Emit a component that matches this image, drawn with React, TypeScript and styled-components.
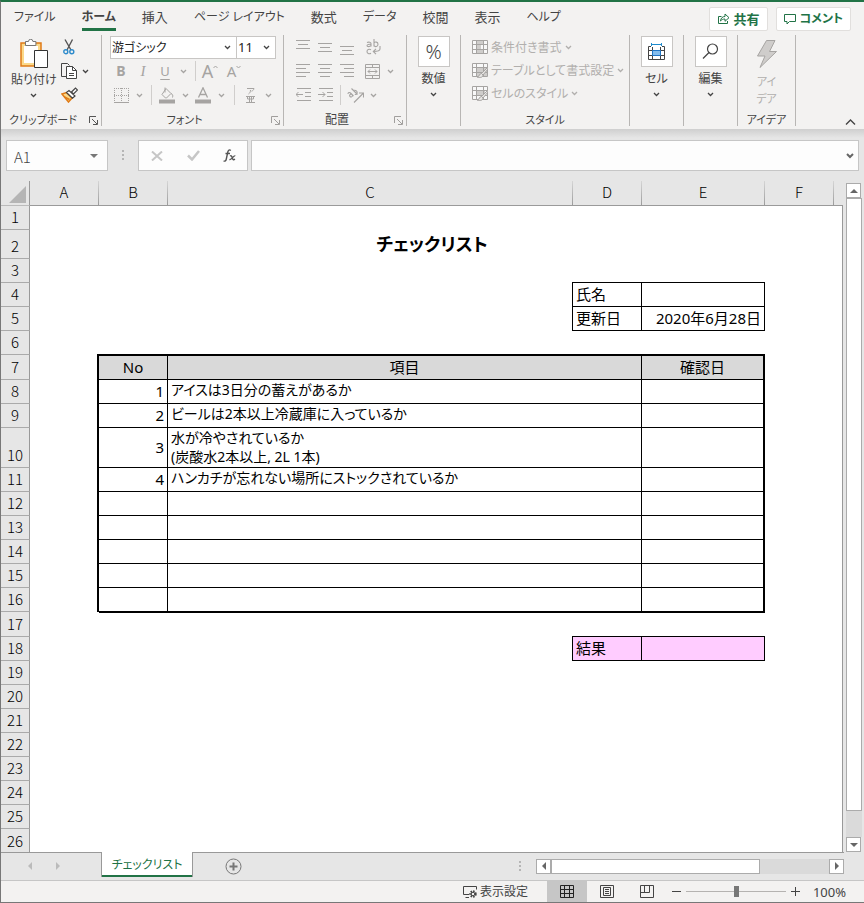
import React from "react";
import styled, { createGlobalStyle, css } from "styled-components";

const GlobalStyle = createGlobalStyle`
  *, *::before, *::after { box-sizing: border-box; }
  body {
    margin: 0;
    background: #e6e6e6;
    color: #444444;
    font-family: "Noto Sans", "Noto Sans CJK JP", sans-serif;
    font-size: 13px;
    font-feature-settings: "palt";
  }
  button, input, select { font: inherit; font-feature-settings: inherit; color: inherit; margin: 0; }
  button { padding: 0; border: 0; background: none; }
  svg { display: block; flex: none; }
`;

/* ---------- window frame ---------- */

const Window = styled.div`
  min-height: 100vh;
  display: flex;
  flex-direction: column;
  border: 1px solid #777777;
  border-top: 2px solid #217346;
  border-right: 0;
  background: #e6e6e6;
`;

/* ---------- tabs ---------- */

const TabBar = styled.nav`
  height: 33px;
  display: flex;
  align-items: center;
  padding: 0 13px 0 13px;
  background: #f3f2f1;
`;

const TabList = styled.div`
  display: flex;
  gap: 26px;
  flex: 1;
`;

const RibbonTab = styled.button<{ $active?: boolean; $kana?: boolean }>`
  height: 25px;
  line-height: 22px;
  font-size: ${(p) => (p.$kana ? 12 : 13)}px;
  white-space: nowrap;
  border-bottom: 3px solid transparent;
  ${(p) =>
    p.$active &&
    css`
      font-weight: 700;
      border-bottom-color: #217346;
    `}
`;

const TopActions = styled.div`
  display: flex;
  gap: 8px;
`;

const TopAction = styled.button<{ $kana?: boolean }>`
  height: 24px;
  display: flex;
  align-items: center;
  gap: 4px;
  padding: 0 7px;
  border: 1px solid #e1dfdd;
  border-radius: 2px;
  background: #ffffff;
  color: #217346;
  font-size: ${(p) => (p.$kana ? 12 : 13)}px;
  font-weight: 700;
  line-height: 20px;
  white-space: nowrap;
`;

/* ---------- ribbon ---------- */

const Ribbon = styled.div`
  height: 94px;
  display: flex;
  background: #f3f2f1;
`;

const Group = styled.section<{ $width: number }>`
  width: ${(p) => p.$width}px;
  height: 91px;
  display: flex;
  flex-direction: column;
  border-right: 1px solid #b8b6b4;
`;

const GroupBody = styled.div<{ $pad?: number; $gap?: number; $center?: boolean }>`
  flex: 1;
  display: flex;
  flex-direction: ${(p) => (p.$center ? "column" : "row")};
  align-items: ${(p) => (p.$center ? "center" : "flex-start")};
  gap: ${(p) => p.$gap ?? 0}px;
  padding-left: ${(p) => p.$pad ?? 0}px;
`;

const GroupFooter = styled.div`
  height: 12px;
  display: flex;
  align-items: center;
  font-size: 12px;
  line-height: 12px;
`;

const GroupName = styled.div<{ $kana?: boolean }>`
  flex: 1;
  font-size: ${(p) => (p.$kana ? 11 : 12)}px;
  text-align: center;
  white-space: nowrap;
`;

const Launcher = styled.button<{ $off?: boolean }>`
  width: 16px;
  padding-left: 4px;
  color: ${(p) => (p.$off ? "#a19f9d" : "#555555")};
`;

const ToolColumn = styled.div`
  display: flex;
  flex-direction: column;
`;

const StyleList = styled(ToolColumn)`
  padding-top: 1px;
`;

const ToolRow = styled.div<{ $gap?: number; $pad?: number; $off?: boolean }>`
  height: 24px;
  display: flex;
  align-items: center;
  gap: ${(p) => p.$gap ?? 0}px;
  padding-left: ${(p) => p.$pad ?? 0}px;
  color: ${(p) => (p.$off ? "#a6a4a2" : "#444444")};
`;

const Tool = styled.button<{ $width?: number }>`
  width: ${(p) => p.$width ?? 22}px;
  height: 22px;
  display: flex;
  align-items: center;
  justify-content: center;
  line-height: 20px;
`;

const BoldTool = styled(Tool)`
  font-weight: 700;
  font-size: 14px;
`;

const ItalicTool = styled(Tool)`
  font-family: "Liberation Serif", serif;
  font-style: italic;
  font-size: 15px;
`;

const UnderlineTool = styled(Tool)`
  text-decoration: underline;
  text-underline-offset: 3px;
`;

const SizeTool = styled(Tool)<{ $small?: boolean }>`
  font-size: ${(p) => (p.$small ? 15 : 18)}px;
`;

const SizeMark = styled.span`
  height: 12px;
`;

const Divider = styled.span`
  width: 1px;
  height: 20px;
  background: #d0cecc;
`;

const BigTool = styled.button<{ $off?: boolean }>`
  display: flex;
  flex-direction: column;
  align-items: center;
  line-height: 16px;
  color: ${(p) => (p.$off ? "#b1afad" : "#444444")};
`;

const BigIcon = styled.span`
  height: 36px;
  padding-top: 4px;
`;

const ToolLabel = styled.span`
  display: block;
  height: 18px;
  line-height: 18px;
  font-size: 12px;
`;

const TwoLineLabel = styled.span`
  display: flex;
  flex-direction: column;
  align-items: center;
  padding-top: 2px;
  line-height: 17px;
  font-size: 11px;
`;

const TileIcon = styled.span`
  width: 32px;
  height: 31px;
  display: grid;
  place-items: center;
  margin: 1px 0 3px;
  border: 1px solid #c8c6c4;
  background: #ffffff;
  font-size: 20px;
  font-weight: 300;
`;

const ChevronBox = styled.span`
  height: 12px;
  display: grid;
  place-items: center;
`;

const StyleTool = styled.button`
  height: 23px;
  display: flex;
  align-items: center;
  gap: 3px;
  color: #b1afad;
  font-size: 12px;
  line-height: 20px;
  white-space: nowrap;
`;

const CollapseArea = styled.div`
  flex: 1;
  display: flex;
  justify-content: flex-end;
  align-items: flex-end;
  padding: 0 8px 3px 0;
`;

const Combo = styled.span<{ $width: number }>`
  width: ${(p) => p.$width}px;
  height: 23px;
  display: grid;
  grid-template-columns: 1fr 12px;
  align-items: center;
  border: 1px solid #c8c6c4;
  background: #ffffff;
  & + & { border-left: 0; }
  & > svg { grid-area: 1 / 2; pointer-events: none; }
`;

const ComboSelect = styled.select<{ $kana?: boolean }>`
  grid-area: 1 / 1 / 2 / 3;
  width: 100%;
  height: 21px;
  appearance: none;
  border: 0;
  padding: 0 1px;
  background: transparent;
  color: #222222;
  font-size: ${(p) => (p.$kana ? 12 : 13)}px;
`;

/* ---------- formula bar ---------- */

const FormulaBar = styled.div`
  height: 52px;
  display: flex;
  align-items: flex-start;
  padding: 11px 5px 0 5px;
  background: linear-gradient(#cfcfcf, #e6e6e6 9px);
`;

const Field = styled.div<{ $width?: number }>`
  ${(p) => (p.$width ? `width: ${p.$width}px;` : "flex: 1;")}
  height: 31px;
  display: flex;
  align-items: center;
  border: 1px solid #c6c6c6;
  background: #fdfdfd;
`;

const FieldInput = styled.input`
  flex: 1;
  min-width: 0;
  height: 29px;
  border: 0;
  padding: 2px 0 0 7px;
  background: transparent;
  font-family: "Noto Sans CJK JP", sans-serif;
  font-size: 15px;
  font-weight: 300;
`;

const FieldButton = styled.button<{ $width: number }>`
  width: ${(p) => p.$width}px;
  height: 29px;
  display: grid;
  place-items: center;
  color: #777777;
`;

const Grip = styled.span<{ $width: number }>`
  width: ${(p) => p.$width}px;
  height: 31px;
  display: grid;
  place-items: center;
`;

const FormulaGap = styled.span`
  width: 3px;
`;

/* ---------- sheet ---------- */

const SheetArea = styled.div`
  display: flex;
`;

const Sheet = styled.table`
  flex: 1;
  table-layout: fixed;
  width: 100%;
  border-collapse: separate;
  border-spacing: 0;
  color: #000000;
  font-size: 15px;
  line-height: 20px;
`;

const SheetCol = styled.col<{ $width?: number }>`
  ${(p) => p.$width && `width: ${p.$width}px;`}
`;

const ColumnHead = styled.th<{ $last?: boolean }>`
  height: 25px;
  padding: 0 0 2px;
  background: #e6e6e6;
  border-bottom: 1px solid #999999;
  border-right: 1px solid;
  border-image: linear-gradient(#d8d8d8, #999999) 1;
  border-top: 0;
  border-left: 0;
  ${(p) => p.$last && "border-right: 0;"}
  font-family: "Noto Sans CJK JP", sans-serif;
  font-weight: 300;
`;

const Corner = styled.th`
  padding: 2px 3px 0 8px;
  background: #e6e6e6;
  border-right: 1px solid #999999;
  border-bottom: 1px solid #bbbbbb;
`;

const RowHead = styled.th<{ $height: number }>`
  height: ${(p) => p.$height}px;
  padding: 0 0 2px;
  vertical-align: bottom;
  background: #e6e6e6;
  border-right: 1px solid #999999;
  border-bottom: 1px solid #aaaaaa;
  font-family: "Noto Sans CJK JP", sans-serif;
  font-weight: 300;
  tr:last-child > & {
    padding-bottom: 1px;
    border-bottom: 0;
  }
`;

type Line = 0 | 1 | 2;

const Cell = styled.td<{
  $right?: Line;
  $bottom?: Line;
  $top?: Line;
  $align?: string;
  $fill?: string;
  $corner?: Line;
}>`
  padding: 0 3px 1px;
  background: ${(p) => p.$fill ?? "#ffffff"};
  text-align: ${(p) => p.$align ?? "left"};
  border: 0 solid #000000;
  border-top-width: ${(p) => p.$top ?? 0}px;
  border-right-width: ${(p) => p.$right ?? 0}px;
  border-bottom-width: ${(p) => p.$bottom ?? 0}px;
  ${(p) => p.$corner && `box-shadow: -${p.$corner}px -1px 0 #000000;`}
`;

const TitleCell = styled(Cell)`
  font-size: 18px;
  font-weight: 700;
  line-height: 24px;
`;

const ItemCell = styled(Cell)`
  padding-bottom: 0;
  vertical-align: top;
  font-size: 14px;
  line-height: 19px;
  white-space: pre-line;
`;

const EdgeCell = styled.td`
  padding: 0;
  background: #ffffff;
  border-right: 1px solid #999999;
`;

const ScrollColumn = styled.div`
  width: 21px;
  display: flex;
  flex-direction: column;
  padding: 2px 2px 0 3px;
`;

const ScrollTrack = styled.div<{ $horizontal?: boolean }>`
  flex: 1;
  display: flex;
  flex-direction: ${(p) => (p.$horizontal ? "row" : "column")};
  background: #dadada;
`;

const ScrollButton = styled.button`
  width: 15px;
  height: 15px;
  flex: none;
  display: grid;
  place-items: center;
  border: 1px solid #ababab;
  background: #ffffff;
  color: #666666;
`;

const ScrollThumb = styled.div<{ $share: number }>`
  flex: 0 0 ${(p) => p.$share}%;
  border: 1px solid #ababab;
  background: #ffffff;
`;

/* ---------- sheet tabs ---------- */

const SheetTabs = styled.div`
  height: 29px;
  display: flex;
  align-items: flex-start;
  border-bottom: 1px solid #c6c6c6;
`;

const TabArrows = styled.div`
  width: 100px;
  height: 27px;
  display: flex;
  align-items: center;
  gap: 20px;
  padding-left: 25px;
  border-top: 1px solid #999999;
  color: #bbbbbb;
`;

const SheetTab = styled.button`
  width: 92px;
  height: 25px;
  border: solid #999999;
  border-width: 0 1px;
  box-shadow: inset 0 -2px #217346;
  background: #ffffff;
  color: #217346;
  font-size: 12px;
  line-height: 24px;
`;

const TabRest = styled.div`
  flex: 1;
  height: 27px;
  display: flex;
  align-items: center;
  justify-content: space-between;
  margin-right: 20px;
  padding-left: 32px;
  border-top: 1px solid #999999;
`;

const HorizontalScroll = styled.div`
  flex: 0 1 340px;
  height: 15px;
  display: flex;
  align-items: center;
`;

const ScrollBody = styled.div`
  flex: 1;
  height: 15px;
  display: flex;
`;

/* ---------- status bar ---------- */

const StatusBar = styled.footer`
  flex: 1;
  min-height: 20px;
  display: flex;
  align-items: center;
  justify-content: flex-end;
  padding-right: 18px;
  background: #f3f2f1;
`;

const DisplaySettings = styled.button`
  display: flex;
  align-items: center;
  gap: 2px;
  margin-right: 19px;
  font-size: 12px;
  line-height: 20px;
`;

const ViewButton = styled.button<{ $active?: boolean }>`
  width: 40px;
  height: 21px;
  display: grid;
  place-items: center;
  background: ${(p) => (p.$active ? "#c6c6c6" : "transparent")};
`;

const ZoomButton = styled.button`
  width: 19px;
  height: 20px;
  display: grid;
  place-items: center;
`;

const ZoomSlider = styled.input`
  width: 100px;
  height: 16px;
  appearance: none;
  background: linear-gradient(#b5b3b1, #b5b3b1) center / 100% 1px no-repeat;
  &::-webkit-slider-thumb {
    appearance: none;
    width: 5px;
    height: 11px;
    background: #777777;
  }
`;

const ZoomValue = styled.span`
  width: 41px;
  text-align: right;
  line-height: 20px;
`;

/* ---------- icons ---------- */

const Chevron = ({ color = "currentColor" }: { color?: string }) => (
  <svg width="7" height="5" viewBox="0 0 7 5" fill="none" stroke={color} strokeWidth="1.3">
    <path d="M1 1l2.5 2.5L6 1" />
  </svg>
);

const Triangle = ({ dir }: { dir: "up" | "down" | "left" | "right" }) => {
  const d = {
    up: "M0 6L4 2L8 6Z",
    down: "M0 2L4 6L8 2Z",
    left: "M6 0L2 4L6 8Z",
    right: "M2 0L6 4L2 8Z",
  }[dir];
  return (
    <svg width="8" height="8" viewBox="0 0 8 8" fill="currentColor">
      <path d={d} />
    </svg>
  );
};

const Dots = () => (
  <svg width="2" height="11" viewBox="0 0 2 11" fill="#b5b5b5">
    <path d="M0 0h2v2H0zM0 4h2v2H0zM0 8h2v2H0z" />
  </svg>
);

const LauncherIcon = () => (
  <svg width="9" height="9" viewBox="0 0 9 9" fill="none" stroke="currentColor">
    <path d="M.5 7V.5H7M3 3l5 5M8.500 4v4.500H4" />
  </svg>
);

const ShareIcon = () => (
  <svg width="13" height="13" viewBox="0 0 13 13" fill="none" stroke="currentColor">
    <path d="M4.500 4.500h-3v7h9V9M3.500 9c.3-3 2-4.500 4.500-4.500V2l4 3.700L8 9.300V7C6 7 4.700 7.600 3.500 9z" />
  </svg>
);

const CommentIcon = () => (
  <svg width="12" height="12" viewBox="0 0 12 12" fill="none" stroke="currentColor">
    <path d="M.5 1.500h11v7H5.500L3 11V8.500H.5z" />
  </svg>
);

const PasteIcon = () => (
  <svg width="28" height="31" viewBox="0 0 28 31" fill="none">
    <path d="M1 4h20v23H1z" fill="#fbd98a" stroke="#e07b17" strokeWidth="1.5" />
    <path d="M4 7h14v17H4z" fill="#fff" />
    <path d="M5.500 6.500v-4h3a2.200 2.200 0 0 1 4.400 0h3v4z" fill="#fff" stroke="#777" />
    <path d="M14.500 11.500h13v17h-13z" fill="#fff" stroke="#333" />
  </svg>
);

const ScissorsIcon = () => (
  <svg width="12" height="16" viewBox="0 0 12 16" fill="none">
    <path d="M2 0.500l6 10.500M9.500 0.500L4 11" stroke="#555" strokeWidth="1.400" />
    <circle cx="2.800" cy="12.700" r="2" stroke="#2e8bcb" strokeWidth="1.400" />
    <circle cx="8.800" cy="12.700" r="2" stroke="#2e8bcb" strokeWidth="1.400" />
  </svg>
);

const CopyIcon = () => (
  <svg width="17" height="17" viewBox="0 0 17 17" fill="none" stroke="#444">
    <path d="M5.500 13.500h-5V.5h6l2 2" />
    <path d="M5.500 3.500h6l4 4v8h-10z" fill="#fff" />
    <path d="M11.500 3.500v4h4M8 10.500h5M8 12.500h5" />
  </svg>
);

const PainterIcon = () => (
  <svg width="17" height="16" viewBox="0 0 17 16" fill="none">
    <path d="M1 7l4.500-1.500 5.500 5.500-3.500 4z" fill="#fbd98a" stroke="#e07b17" strokeWidth="1.500" />
    <path d="M3.500 10l5 2.500" stroke="#e07b17" strokeWidth="1.500" />
    <path d="M5.500 5.500L8 3.500l6 5.500-2.500 2.200zM10.500 5l4-4 2 2L12.500 7z" fill="#fff" stroke="#444" strokeWidth="1.200" />
  </svg>
);

const BorderIcon = () => (
  <svg width="15" height="15" viewBox="0 0 15 15" fill="none" stroke="currentColor">
    <path d="M.5 0v14M14.500 0v14M7.500 0v14M0 .5h15M0 7.500h15" strokeDasharray="1 1" />
    <path d="M0 14.500h15" />
  </svg>
);

const FillIcon = () => (
  <svg width="16" height="17" viewBox="0 0 16 17" fill="none" stroke="currentColor">
    <path d="M7 1.500l5 5-4.500 4.500h-1L3 7.500zM6 .5v5M12 6.500c2 1 2 2 1.500 4" />
    <path d="M0 14.500h16" strokeWidth="4" />
  </svg>
);

const FontColorIcon = () => (
  <svg width="16" height="17" viewBox="0 0 16 17" fill="none" stroke="currentColor">
    <path d="M3.500 10.500L8 .8l4.500 9.700M5 7.500h6" strokeWidth="1.300" />
    <path d="M0 14.500h16" strokeWidth="4" />
  </svg>
);

const RubyIcon = () => (
  <svg width="9" height="17" viewBox="0 0 9 17" fill="none" stroke="currentColor">
    <path d="M1 1.500h7c-.3 1.500-1.200 2.300-2.500 2.700M4.500 3c0 2-.6 3-2 4M0 9.500h9M1.500 9.500v2.500h6V9.500M3.500 9.500V15M5.500 9.500V15M0 15.500h9" />
  </svg>
);

const Lines = ({ top, align }: { top: number; align: "left" | "center" | "right" | "three" }) => {
  const count = align === "three" ? 3 : 4;
  return (
    <svg width="14" height="17" viewBox="0 0 14 17" stroke="currentColor">
      {Array.from({ length: count }, (_, i) => {
        const short = i % 2 === 1;
        const y = top + i * 4 + 0.5;
        const start = !short || align === "left" ? 0 : align === "right" ? 4 : 2;
        const end = !short || align === "right" ? 14 : align === "left" ? 10 : 12;
        return <path key={i} d={`M${start} ${y}H${end}`} />;
      })}
    </svg>
  );
};

const IndentIcon = ({ outward }: { outward?: boolean }) => (
  <svg width="15" height="14" viewBox="0 0 15 14" fill="none" stroke="currentColor">
    <path d="M1 .5h14M9 4.500h6M9 8.500h6M1 12.500h14M0 6.500h7" />
    <path d={outward ? "M2.500 4L0 6.500 2.500 9" : "M4.500 4L7 6.500 4.500 9"} />
  </svg>
);

const WrapIcon = () => (
  <svg width="15" height="16" viewBox="0 0 15 16" fill="none" stroke="currentColor" strokeWidth="1.100">
    <path d="M1 3.500c2-1 4 0 4 1v3M5 5.500c-2-.5-4 0-4 1.200s3 1.200 4 0M8 0v7.500M8 4c1-1.500 4-1.200 4 1.200S9 8.500 8 6.500M5 10.700c-2-1.200-4 0-4 1.800s2 3 4 1.800M14 7v3c0 2-2 2.500-6.500 2.500M10 9.800L7.300 12.500l2.700 2.700" />
  </svg>
);

const MergeIcon = () => (
  <svg width="15" height="15" viewBox="0 0 15 15" fill="none" stroke="currentColor">
    <path d="M.5.5h14v14H.5zM.5 3.500h14M.5 11.500h14M7.500.5v3M7.500 11.500v3M3 7.500h9M5 5.500l-2 2 2 2M10 5.500l2 2-2 2" />
  </svg>
);

const OrientationIcon = () => (
  <svg width="17" height="15" viewBox="0 0 17 15" fill="none" stroke="currentColor" strokeWidth="1.100">
    <path d="M7 14.500L16 5.500M12 5h4.500v4.500" />
    <path d="M1 6c0-1.500 1.500-2 2.500-1L6.500 8M4.500 6C3 6 2 7.500 3 8.500s2.500.5 2.500-1.500M4.500.5l6 6M6.500 2.500c2-1 4.500 1 3.500 3s-2 .5-2 .5" />
  </svg>
);

const StyleIcon = ({ kind }: { kind: "cond" | "table" | "cell" }) => (
  <svg width="16" height="15" viewBox="0 0 16 15" fill="none" stroke="#a6a4a2">
    <path d="M.5.5h15v13H.5z" fill="#f8f8f8" />
    <path d={kind === "cond" ? "M5 1h7v4H5zM5 5h4v4H5zM5 9h6v4H5z" : kind === "table" ? "M5 4h10v9H5z" : "M4 4h9v6H4z"} fill="#cfcdcb" stroke="none" />
    <path d="M.5 4.500h15M.5 9.500h15M4.500.5v13M11.500.5v13" />
    {kind !== "cond" && (
      <path d="M15.500 4.500l-6 6 1.500 1.500 5-6zM9.500 10.500C7 10.500 8 13.500 5 14c3 1 6 .5 6-2z" fill="#e8e6e4" />
    )}
  </svg>
);

const CellsIcon = () => (
  <svg width="17" height="17" viewBox="0 0 17 17" fill="none" stroke="#444">
    <path d="M3 3.500H.5v13h16v-13H14M.5 7.500h16M.5 12.500h16M4.500 4v12.500M12.500 4v12.500" />
    <path d="M4.500 7.500h8v5h-8z" fill="#83bcec" stroke="#1e74c5" />
    <path d="M3.500 1.500h10M3.500 0v3M13.500 0v3" stroke="#1e8bcd" />
  </svg>
);

const FindIcon = () => (
  <svg width="17" height="17" viewBox="0 0 17 17" fill="none" stroke="#444" strokeWidth="1.200">
    <circle cx="10.500" cy="6" r="5" />
    <path d="M7 9.500L1 15.500" />
  </svg>
);

const BoltIcon = () => (
  <svg width="22" height="30" viewBox="0 0 22 30" fill="#cfcdcb" stroke="#a6a4a2">
    <path d="M10.500 1.500H19L13.500 12.500h7L4 28.500l5-11.500H1.500z" />
  </svg>
);

const FxIcon = () => (
  <svg width="13" height="13" viewBox="0 0 13 13" fill="none" stroke="#555" strokeWidth="1.400">
    <path d="M7.800 1.500C6.500.3 5.200 1 4.800 3L3.300 10c-.4 2-1.300 2.500-2.700 1.800M2.500 4.500h4.500M7 7c1.500-1 1.800.5 2.300 2s1 2.300 2.700 1.200M12.300 7C10.500 6 8.500 11.500 6.500 10.300" />
  </svg>
);

const DisplayIcon = () => (
  <svg width="15" height="14" viewBox="0 0 15 14" fill="none" stroke="#444">
    <path d="M6 9.500H.5v-8h13v3M2.500 12.500H6" />
    <circle cx="10" cy="9" r="2.700" strokeWidth="2" strokeDasharray="1.500 1" />
    <circle cx="10" cy="9" r="1.800" />
  </svg>
);

const NormalViewIcon = () => (
  <svg width="14" height="13" viewBox="0 0 14 13" fill="none" stroke="#222">
    <path d="M.5.5h13v12H.5zM.5 4.500h13M.5 8.500h13M4.500.5v12M9.500.5v12" />
  </svg>
);

const PageViewIcon = () => (
  <svg width="14" height="13" viewBox="0 0 14 13" fill="none" stroke="#444">
    <path d="M.5.5h13v12H.5zM3.500 2.500h7v8h-7zM5 4.500h4M5 6.500h4M5 8.500h4" />
  </svg>
);

const BreakViewIcon = () => (
  <svg width="14" height="13" viewBox="0 0 14 13" fill="none" stroke="#444">
    <path d="M.5.5h13v12H.5zM4.500.5v7M.5 7.500h9v-7" />
  </svg>
);

/* ---------- data ---------- */

const tabs = [
  { name: "ファイル", kana: true },
  { name: "ホーム", kana: true, active: true },
  { name: "挿入" },
  { name: "ページ レイアウト", kana: true },
  { name: "数式" },
  { name: "データ", kana: true },
  { name: "校閲" },
  { name: "表示" },
  { name: "ヘルプ", kana: true },
];
const columnWidths = [29, 69, 69, 405, 69, 123, 69];
const columnNames = ["A", "B", "C", "D", "E", "F"];
const rowHeights: Record<number, number> = { 2: 29, 7: 25, 10: 40, 17: 25, 26: 23 };
const items: Record<number, string> = {
  8: "アイスは3日分の蓄えがあるか",
  9: "ビールは2本以上冷蔵庫に入っているか",
  10: "水が冷やされているか\n(炭酸水2本以上, 2L 1本)",
  11: "ハンカチが忘れない場所にストックされているか",
};
const pink = "#ffccff";
const gray = "#d9d9d9";

const rowCells = (row: number) => {
  if (row === 2)
    return (
      <>
        <Cell />
        <TitleCell colSpan={4} $align="center">チェックリスト</TitleCell>
        <Cell />
      </>
    );
  if (row === 3 || row === 17) {
    const top = row === 17 ? 1 : 0;
    return (
      <>
        <Cell />
        <Cell $top={top} />
        <Cell $top={top} />
        <Cell $top={top} $bottom={1} />
        <Cell $top={top} $bottom={1} />
        <Cell />
      </>
    );
  }
  if (row === 4 || row === 5 || row === 18) {
    const fill = row === 18 ? pink : undefined;
    return (
      <>
        <Cell />
        <Cell />
        <Cell $right={1} />
        <Cell $right={1} $bottom={1} $corner={1} $fill={fill}>
          {row === 4 ? "氏名" : row === 5 ? "更新日" : "結果"}
        </Cell>
        <Cell $right={1} $bottom={1} $fill={fill} $align="right">{row === 5 ? "2020年6月28日" : ""}</Cell>
        <Cell />
      </>
    );
  }
  if (row === 6)
    return (
      <>
        <Cell />
        <Cell $bottom={1} />
        <Cell $bottom={1} />
        <Cell $bottom={1} />
        <Cell $bottom={1} />
        <Cell />
      </>
    );
  if (row === 7)
    return (
      <>
        <Cell $right={2} />
        <Cell $top={1} $right={1} $bottom={1} $corner={2} $fill={gray} $align="center">No</Cell>
        <Cell $top={1} $right={1} $bottom={1} $fill={gray} $align="center" colSpan={2}>項目</Cell>
        <Cell $top={1} $right={2} $bottom={1} $fill={gray} $align="center">確認日</Cell>
        <Cell />
      </>
    );
  if (row >= 8 && row <= 16)
    return (
      <>
        <Cell $right={2} />
        <Cell $right={1} $bottom={1} $align="right">{row <= 11 ? row - 7 : ""}</Cell>
        <ItemCell $right={1} $bottom={1} colSpan={2}>{items[row]}</ItemCell>
        <Cell $right={2} $bottom={1} />
        <Cell />
      </>
    );
  return columnNames.map((name) => <Cell key={name} />);
};

const More = ({ width = 14, label }: { width?: number; label: string }) => (
  <Tool $width={width} aria-label={label}>
    <Chevron />
  </Tool>
);

export default function App() {
  return (
    <>
      <GlobalStyle />
      <Window>
        <TabBar>
          <TabList>
            {tabs.map((tab) => (
              <RibbonTab key={tab.name} $active={tab.active} $kana={tab.kana}>{tab.name}</RibbonTab>
            ))}
          </TabList>
          <TopActions>
            <TopAction><ShareIcon />共有</TopAction>
            <TopAction $kana><CommentIcon />コメント</TopAction>
          </TopActions>
        </TabBar>

        <Ribbon>
          <Group $width={101}>
            <GroupBody $pad={10} $gap={4}>
              <BigTool>
                <BigIcon><PasteIcon /></BigIcon>
                <ToolLabel>貼り付け</ToolLabel>
                <ChevronBox><Chevron /></ChevronBox>
              </BigTool>
              <ToolColumn>
                <ToolRow><Tool $width={16} aria-label="切り取り"><ScissorsIcon /></Tool></ToolRow>
                <ToolRow>
                  <Tool $width={17} aria-label="コピー"><CopyIcon /></Tool>
                  <More width={16} label="コピーのオプション" />
                </ToolRow>
                <ToolRow><Tool $width={17} aria-label="書式のコピー"><PainterIcon /></Tool></ToolRow>
              </ToolColumn>
            </GroupBody>
            <GroupFooter>
              <GroupName $kana>クリップボード</GroupName>
              <Launcher aria-label="クリップボードの詳細"><LauncherIcon /></Launcher>
            </GroupFooter>
          </Group>

          <Group $width={182}>
            <GroupBody $pad={8}>
              <ToolColumn>
                <ToolRow>
                  <Combo $width={127}>
                    <ComboSelect $kana aria-label="フォント"><option>游ゴシック</option></ComboSelect>
                    <Chevron />
                  </Combo>
                  <Combo $width={39}>
                    <ComboSelect aria-label="フォント サイズ"><option>11</option></ComboSelect>
                    <Chevron />
                  </Combo>
                </ToolRow>
                <ToolRow $off>
                  <BoldTool>B</BoldTool>
                  <ItalicTool>I</ItalicTool>
                  <UnderlineTool>U</UnderlineTool>
                  <More label="下線のオプション" />
                  <ToolRow $pad={5} $off>
                    <Divider />
                    <SizeTool $width={28} aria-label="拡大">A<SizeMark><svg width="5" height="4" viewBox="0 0 5 4" fill="none" stroke="currentColor"><path d="M.5 3l2-2 2 2" /></svg></SizeMark></SizeTool>
                    <SizeTool $small $width={20} aria-label="縮小">A<SizeMark><svg width="5" height="4" viewBox="0 0 5 4" fill="none" stroke="currentColor"><path d="M.5 1l2 2 2-2" /></svg></SizeMark></SizeTool>
                  </ToolRow>
                </ToolRow>
                <ToolRow $off>
                  <Tool aria-label="罫線"><BorderIcon /></Tool>
                  <More label="罫線のオプション" />
                  <ToolRow $pad={5} $gap={4} $off>
                    <Divider />
                    <Tool aria-label="塗りつぶし"><FillIcon /></Tool>
                  </ToolRow>
                  <More label="塗りつぶしのオプション" />
                  <Tool aria-label="文字色"><FontColorIcon /></Tool>
                  <More label="文字色のオプション" />
                  <ToolRow $pad={6} $gap={4} $off>
                    <Divider />
                    <Tool aria-label="ふりがな"><RubyIcon /></Tool>
                  </ToolRow>
                  <More label="ふりがなのオプション" />
                </ToolRow>
              </ToolColumn>
            </GroupBody>
            <GroupFooter>
              <GroupName $kana>フォント</GroupName>
              <Launcher $off aria-label="フォントの詳細"><LauncherIcon /></Launcher>
            </GroupFooter>
          </Group>

          <Group $width={123}>
            <GroupBody $pad={8}>
              <ToolColumn>
                <ToolRow $off>
                  <Tool aria-label="上揃え"><Lines top={1} align="three" /></Tool>
                  <Tool aria-label="上下中央揃え"><Lines top={4} align="three" /></Tool>
                  <Tool aria-label="下揃え"><Lines top={7} align="three" /></Tool>
                  <Tool $width={30} aria-label="折り返し"><WrapIcon /></Tool>
                </ToolRow>
                <ToolRow $off>
                  <Tool aria-label="左揃え"><Lines top={1} align="left" /></Tool>
                  <Tool aria-label="中央揃え"><Lines top={1} align="center" /></Tool>
                  <Tool aria-label="右揃え"><Lines top={1} align="right" /></Tool>
                  <Tool $width={28} aria-label="セルの結合"><MergeIcon /></Tool>
                  <More width={8} label="結合のオプション" />
                </ToolRow>
                <ToolRow $off>
                  <Tool aria-label="インデントを減らす"><IndentIcon outward /></Tool>
                  <Tool aria-label="インデントを増やす"><IndentIcon /></Tool>
                  <ToolRow $pad={4} $off>
                    <Divider />
                    <Tool $width={28} aria-label="方向"><OrientationIcon /></Tool>
                  </ToolRow>
                  <More width={8} label="方向のオプション" />
                </ToolRow>
              </ToolColumn>
            </GroupBody>
            <GroupFooter>
              <GroupName>配置</GroupName>
              <Launcher $off aria-label="配置の詳細"><LauncherIcon /></Launcher>
            </GroupFooter>
          </Group>

          <Group $width={54}>
            <GroupBody $center>
              <BigTool>
                <TileIcon>%</TileIcon>
                <ToolLabel>数値</ToolLabel>
                <ChevronBox><Chevron /></ChevronBox>
              </BigTool>
            </GroupBody>
          </Group>

          <Group $width={169}>
            <GroupBody $pad={11}>
              <StyleList>
                <StyleTool><StyleIcon kind="cond" />条件付き書式 <Chevron /></StyleTool>
                <StyleTool><StyleIcon kind="table" />テーブルとして書式設定 <Chevron /></StyleTool>
                <StyleTool><StyleIcon kind="cell" />セルのスタイル <Chevron /></StyleTool>
              </StyleList>
            </GroupBody>
            <GroupFooter><GroupName $kana>スタイル</GroupName></GroupFooter>
          </Group>

          <Group $width={54}>
            <GroupBody $center>
              <BigTool>
                <TileIcon><CellsIcon /></TileIcon>
                <ToolLabel>セル</ToolLabel>
                <ChevronBox><Chevron /></ChevronBox>
              </BigTool>
            </GroupBody>
          </Group>

          <Group $width={54}>
            <GroupBody $center>
              <BigTool>
                <TileIcon><FindIcon /></TileIcon>
                <ToolLabel>編集</ToolLabel>
                <ChevronBox><Chevron /></ChevronBox>
              </BigTool>
            </GroupBody>
          </Group>

          <Group $width={58}>
            <GroupBody $center>
              <BigTool $off>
                <BigIcon><BoltIcon /></BigIcon>
                <TwoLineLabel>
                  <span>アイ</span>
                  <span>デア</span>
                </TwoLineLabel>
              </BigTool>
            </GroupBody>
            <GroupFooter><GroupName $kana>アイデア</GroupName></GroupFooter>
          </Group>

          <CollapseArea>
            <button aria-label="リボンを折りたたむ">
              <svg width="11" height="8" viewBox="0 0 11 8" fill="none" stroke="#444" strokeWidth="1.400">
                <path d="M1 6.500l4.500-4.500L10 6.500" />
              </svg>
            </button>
          </CollapseArea>
        </Ribbon>

        <FormulaBar>
          <Field $width={102}>
            <FieldInput aria-label="名前ボックス" defaultValue="A1" />
            <FieldButton $width={27} aria-label="名前の一覧"><Triangle dir="down" /></FieldButton>
          </Field>
          <Grip $width={30}><Dots /></Grip>
          <Field $width={110}>
            <FieldButton $width={36} aria-label="キャンセル">
              <svg width="12" height="10" viewBox="0 0 12 10" stroke="#c6c6c6" strokeWidth="2"><path d="M1 .5l10 9M11 .5L1 9.500" /></svg>
            </FieldButton>
            <FieldButton $width={36} aria-label="入力">
              <svg width="13" height="11" viewBox="0 0 13 11" fill="none" stroke="#c6c6c6" strokeWidth="2.500"><path d="M1 5.500l4 4L12 1" /></svg>
            </FieldButton>
            <FieldButton $width={36} aria-label="関数の挿入"><FxIcon /></FieldButton>
          </Field>
          <FormulaGap />
          <Field>
            <FieldInput aria-label="数式バー" />
            <FieldButton $width={16} aria-label="数式バーの展開">
              <svg width="8" height="6" viewBox="0 0 8 6" fill="none" stroke="#666" strokeWidth="2"><path d="M1 1l3 3 3-3" /></svg>
            </FieldButton>
          </Field>
        </FormulaBar>

        <SheetArea>
          <Sheet>
            <colgroup>
              {columnWidths.map((width, i) => <SheetCol key={i} $width={width} />)}
              <SheetCol />
            </colgroup>
            <thead>
              <tr>
                <Corner aria-label="すべて選択">
                  <svg width="17" height="17" viewBox="0 0 17 17" fill="#b5b5b5"><path d="M17 0v17H0z" /></svg>
                </Corner>
                {columnNames.map((name) => <ColumnHead key={name} scope="col">{name}</ColumnHead>)}
                <ColumnHead $last />
              </tr>
            </thead>
            <tbody>
              {Array.from({ length: 26 }, (_, i) => i + 1).map((row) => (
                <tr key={row}>
                  <RowHead scope="row" $height={rowHeights[row] ?? 24}>{row}</RowHead>
                  {rowCells(row)}
                  <EdgeCell />
                </tr>
              ))}
            </tbody>
          </Sheet>
          <ScrollColumn>
            <ScrollButton aria-label="上へ"><Triangle dir="up" /></ScrollButton>
            <ScrollTrack><ScrollThumb $share={96} /></ScrollTrack>
            <ScrollButton aria-label="下へ"><Triangle dir="down" /></ScrollButton>
          </ScrollColumn>
        </SheetArea>

        <SheetTabs>
          <TabArrows>
            <Triangle dir="left" />
            <Triangle dir="right" />
          </TabArrows>
          <SheetTab>チェックリスト</SheetTab>
          <TabRest>
            <button aria-label="新しいシート">
              <svg width="17" height="17" viewBox="0 0 17 17" fill="none" stroke="#777"><circle cx="8.500" cy="8.500" r="7.500" /><path d="M4.500 8.500h8M8.500 4.500v8" strokeWidth="2" /></svg>
            </button>
            <HorizontalScroll>
              <Grip $width={32}><Dots /></Grip>
              <ScrollBody>
                <ScrollButton aria-label="左へ"><Triangle dir="left" /></ScrollButton>
                <ScrollTrack $horizontal><ScrollThumb $share={75} /></ScrollTrack>
                <ScrollButton aria-label="右へ"><Triangle dir="right" /></ScrollButton>
              </ScrollBody>
            </HorizontalScroll>
          </TabRest>
        </SheetTabs>

        <StatusBar>
          <DisplaySettings><DisplayIcon />表示設定</DisplaySettings>
          <ViewButton $active aria-label="標準"><NormalViewIcon /></ViewButton>
          <ViewButton aria-label="ページ レイアウト表示"><PageViewIcon /></ViewButton>
          <ViewButton aria-label="改ページ プレビュー"><BreakViewIcon /></ViewButton>
          <ZoomButton aria-label="縮小表示">
            <svg width="9" height="9" viewBox="0 0 9 9" stroke="#444"><path d="M0 4.500h9" /></svg>
          </ZoomButton>
          <ZoomSlider type="range" min="0" max="100" defaultValue="50" aria-label="ズーム" />
          <ZoomButton aria-label="拡大表示">
            <svg width="9" height="9" viewBox="0 0 9 9" stroke="#444"><path d="M0 4.500h9M4.500 0v9" /></svg>
          </ZoomButton>
          <ZoomValue>100%</ZoomValue>
        </StatusBar>
      </Window>
    </>
  );
}
